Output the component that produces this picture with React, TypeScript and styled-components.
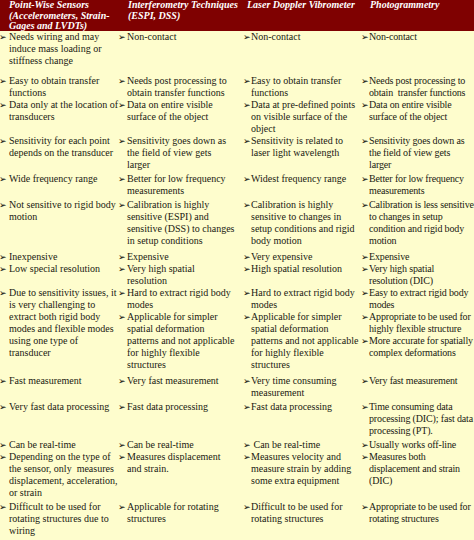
import React from 'react'
import styled, { createGlobalStyle } from 'styled-components'

const GlobalStyle = createGlobalStyle`
	html, body {
		margin: 0;
		padding: 0;
		background: #fefdcd;
		overflow: hidden;
	}
	#root {
		width: 474px;
		height: 540px;
		overflow: hidden;
	}
`

const COLUMNS = '118px 125px 118px 122px'

// Each row: what is added below the tallest cell, then the bullets of each cell
// (a bullet is a list of its lines, wrapped as in the original slide).
type Row = { after: number, cells: string[][][] }

const headers: { lines: string[], indent: number }[] = [
	{ lines: ['Point-Wise Sensors', '(Accelerometers, Strain-', 'Gages and LVDTs)'], indent: 10 },
	{ lines: ['Interferometry Techniques', '(ESPI, DSS)'], indent: 11 },
	{ lines: ['Laser Doppler Vibrometer'], indent: 5 },
	{ lines: ['Photogrammetry'], indent: 10 },
]

const sensitivityDown = [['Sensitivity goes down as', 'the field of view gets', 'larger']]
const lowFrequency = [['Better for low frequency', 'measurements']]
const simpler = ['Applicable for simpler', 'spatial deformation', 'patterns and not applicable', 'for highly flexible', 'structures']

const rows: Row[] = [
	{ after: 8, cells: [
		[['Needs wiring and may', 'induce mass loading or', 'stiffness change']],
		[['Non-contact']],
		[['Non-contact']],
		[['Non-contact']],
	] },
	{ after: 0, cells: [
		[['Easy to obtain transfer', 'functions']],
		[['Needs post processing to', 'obtain transfer functions']],
		[['Easy to obtain transfer', 'functions']],
		[['Needs post processing to', 'obtain  transfer functions']],
	] },
	{ after: 0, cells: [
		[['Data only at the location of', 'transducers']],
		[['Data on entire visible', 'surface of the object']],
		[['Data at pre-defined points', 'on visible surface of the', 'object']],
		[['Data on entire visible', 'surface of the object']],
	] },
	{ after: 2, cells: [
		[['Sensitivity for each point', 'depends on the transducer']],
		sensitivityDown,
		[['Sensitivity is related to', 'laser light wavelength']],
		sensitivityDown,
	] },
	{ after: 2, cells: [
		[['Wide frequency range']],
		lowFrequency,
		[['Widest frequency range']],
		lowFrequency,
	] },
	{ after: 4, cells: [
		[['Not sensitive to rigid body', 'motion']],
		[['Calibration is highly', 'sensitive (ESPI) and', 'sensitive (DSS) to changes', 'in setup conditions']],
		[['Calibration is highly', 'sensitive to changes in', 'setup conditions and rigid', 'body motion']],
		[['Calibration is less sensitive', 'to changes in setup', 'condition and rigid body', 'motion']],
	] },
	{ after: 0, cells: [
		[['Inexpensive']],
		[['Expensive']],
		[['Very expensive']],
		[['Expensive']],
	] },
	{ after: 0, cells: [
		[['Low special resolution']],
		[['Very high spatial', 'resolution']],
		[['High spatial resolution']],
		[['Very high spatial', 'resolution (DIC)']],
	] },
	{ after: 4, cells: [
		[['Due to sensitivity issues, it', 'is very challenging to', 'extract both rigid body', 'modes and flexible modes', 'using one type of', 'transducer']],
		[['Hard to extract rigid body', 'modes'], simpler],
		[['Hard to extract rigid body', 'modes'], simpler],
		[['Easy to extract rigid body', 'modes'], ['Appropriate to be used for', 'highly flexible structure'], ['More accurate for spatially', 'complex deformations']],
	] },
	{ after: 2, cells: [
		[['Fast measurement']],
		[['Very fast measurement']],
		[['Very time consuming', 'measurement']],
		[['Very fast measurement']],
	] },
	{ after: 2, cells: [
		[['Very fast data processing']],
		[['Fast data processing']],
		[['Fast data processing']],
		[['Time consuming data', 'processing (DIC); fast data', 'processing (PT).']],
	] },
	{ after: 0, cells: [
		[['Can be real-time']],
		[['Can be real-time']],
		[[' Can be real-time']],
		[['Usually works off-line']],
	] },
	{ after: 2, cells: [
		[['Depending on the type of', 'the sensor, only  measures', 'displacement, acceleration,', 'or strain']],
		[['Measures displacement', 'and strain.']],
		[['Measures velocity and', 'measure strain by adding', 'some extra equipment']],
		[['Measures both', 'displacement and strain', '(DIC)']],
	] },
	{ after: 0, cells: [
		[['Difficult to be used for', 'rotating structures due to', 'wiring']],
		[['Applicable for rotating', 'structures']],
		[['Difficult to be used for', 'rotating structures']],
		[['Appropriate to be used for', 'rotating structures']],
	] },
]

const Table = styled.div`
	margin-left: -1px;
	width: 490px;
	font-family: "Liberation Serif", "Times New Roman", serif;
	color: #1a1a12;
`

const HeaderRow = styled.div`
	display: grid;
	grid-template-columns: ${COLUMNS};
	height: 31px;
	background: #7f0101;
	overflow: hidden;
`

const HeaderCell = styled.div<{ $indent: number }>`
	padding-left: ${p => p.$indent}px;
	font-size: 10px;
	line-height: 10.5px;
	font-weight: bold;
	font-style: italic;
	color: #fff;
	white-space: pre;
`

const BodyRow = styled.div<{ $after: number }>`
	display: grid;
	grid-template-columns: ${COLUMNS};
	padding-bottom: ${p => p.$after}px;
`

// The last column runs into the edge of the slide, so its text is set a little tighter.
const Cell = styled.ul<{ $first: boolean, $tight: boolean }>`
	margin: 0;
	padding: 0 0 0 ${p => p.$first ? 0 : 1}px;
	list-style: none;
	letter-spacing: ${p => p.$tight ? '-0.15px' : 'normal'};
`

const Bullet = styled.li<{ $textIndent: number }>`
	display: grid;
	grid-template-columns: ${p => p.$textIndent}px auto;
	font-size: 10px;
	line-height: 12px;
	white-space: pre;
`

const Arrow = styled.span`
	font-family: "DejaVu Sans", sans-serif;
	font-size: 9px;
	line-height: 12px;
	color: #000;
`

const indents = [10, 9, 8, 8]

export default function App() {
	return (
		<>
			<GlobalStyle />
			<Table>
				<HeaderRow>
					{headers.map((h, i) =>
						<HeaderCell key={i} $indent={h.indent}>
							{h.lines.join('\n')}
						</HeaderCell>
					)}
				</HeaderRow>
				{rows.map((row, r) =>
					<BodyRow key={r} $after={row.after}>
						{row.cells.map((bullets, c) =>
							<Cell key={c} $first={c === 0} $tight={c === 3}>
								{bullets.map((lines, b) =>
									<Bullet key={b} $textIndent={indents[c]}>
										<Arrow>➢</Arrow>
										<span>{lines.join('\n')}</span>
									</Bullet>
								)}
							</Cell>
						)}
					</BodyRow>
				)}
			</Table>
		</>
	)
}
